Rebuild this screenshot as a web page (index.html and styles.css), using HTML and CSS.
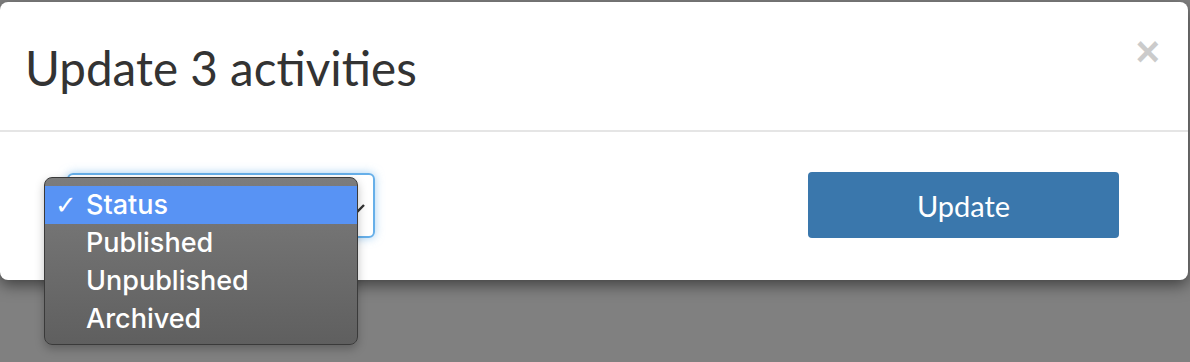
FILE: index.html
```html
<!DOCTYPE html>
<html>
<head>
<meta charset="utf-8">
<link rel="stylesheet" href="styles.css">
</head>
<body>
<div class="modal">
  <div class="modal-header">
    <h4 class="modal-title">Update 3 activities</h4>
    <span class="close">&times;</span>
  </div>
  <div class="modal-body">
    <div class="select">
      <svg class="chevron" width="14" height="10" viewBox="0 0 14 10"><path d="M1 2 L7 8 L13 2" fill="none" stroke="#333" stroke-width="2.4"/></svg>
    </div>
    <button class="btn-update">Update</button>
  </div>
</div>
<div class="popup">
  <div class="opt active"><span class="check">✓</span>Status</div>
  <div class="opt">Published</div>
  <div class="opt">Unpublished</div>
  <div class="opt">Archived</div>
</div>
</body>
</html>
```
FILE: styles.css
```css
html, body {
  margin: 0;
  padding: 0;
}
body {
  width: 1190px;
  height: 362px;
  overflow: hidden;
  background: #808080;
  position: relative;
  font-family: Lato, "Liberation Sans", sans-serif;
}
.modal {
  margin-top: 2px;
  width: 1188px;
  height: 278px;
  background: #fff;
  border-radius: 8px;
  box-shadow: 0 5px 15px rgba(0,0,0,.5);
  position: relative;
}
.modal-header {
  height: 128px;
  border-bottom: 2px solid #e5e5e5;
  display: flex;
  align-items: center;
  justify-content: space-between;
  padding: 0 28px 0 25px;
  box-sizing: content-box;
}
.modal-title {
  margin: 0;
  font-size: 47.6px;
  font-weight: 400;
  color: #333;
  line-height: 1;
  padding-top: 4px;
}
.close {
  font-family: "Liberation Sans", sans-serif;
  font-size: 42px;
  font-weight: 700;
  color: #000;
  opacity: .2;
  line-height: 1;
  margin-top: -28px;
}
.modal-body {
  display: flex;
  justify-content: space-between;
  align-items: flex-start;
  padding: 40px 69px 0 67px;
}
.select {
  margin-top: 1px;
  width: 308px;
  height: 65px;
  box-sizing: border-box;
  border: 2px solid #66afe9;
  border-radius: 6px;
  box-shadow: 0 0 10px rgba(102,175,233,.6);
  display: flex;
  align-items: center;
  justify-content: flex-end;
  padding: 0 8px 0 20px;
}
.chevron {
  margin-top: 4px;
}
.btn-update {
  width: 311px;
  height: 66px;
  background: #3a77ac;
  border: 0;
  border-radius: 4px;
  color: #fff;
  font-family: Lato, "Liberation Sans", sans-serif;
  font-size: 29px;
  padding: 0;
}
.popup {
  position: absolute;
  left: 44px;
  top: 177px;
  width: 314px;
  height: 168px;
  box-sizing: border-box;
  padding-top: 8px;
  border-radius: 8px;
  border: 1px solid #3a3a3a;
  background: linear-gradient(#7c7c7c, #5f5f5f);
  box-shadow: 0 4px 10px rgba(0,0,0,.25);
  font-family: Inter, "Noto Sans", sans-serif;
  font-size: 27px;
  font-weight: 500;
  color: #fff;
  overflow: hidden;
}
.opt {
  height: 38px;
  line-height: 38px;
  padding-left: 41px;
  position: relative;
}
.opt.active {
  background: #5893f4;
}
.check {
  position: absolute;
  left: 10px;
  top: 0;
  font-size: 26px;
  font-family: "DejaVu Sans", sans-serif;
  font-weight: 400;
}
```
